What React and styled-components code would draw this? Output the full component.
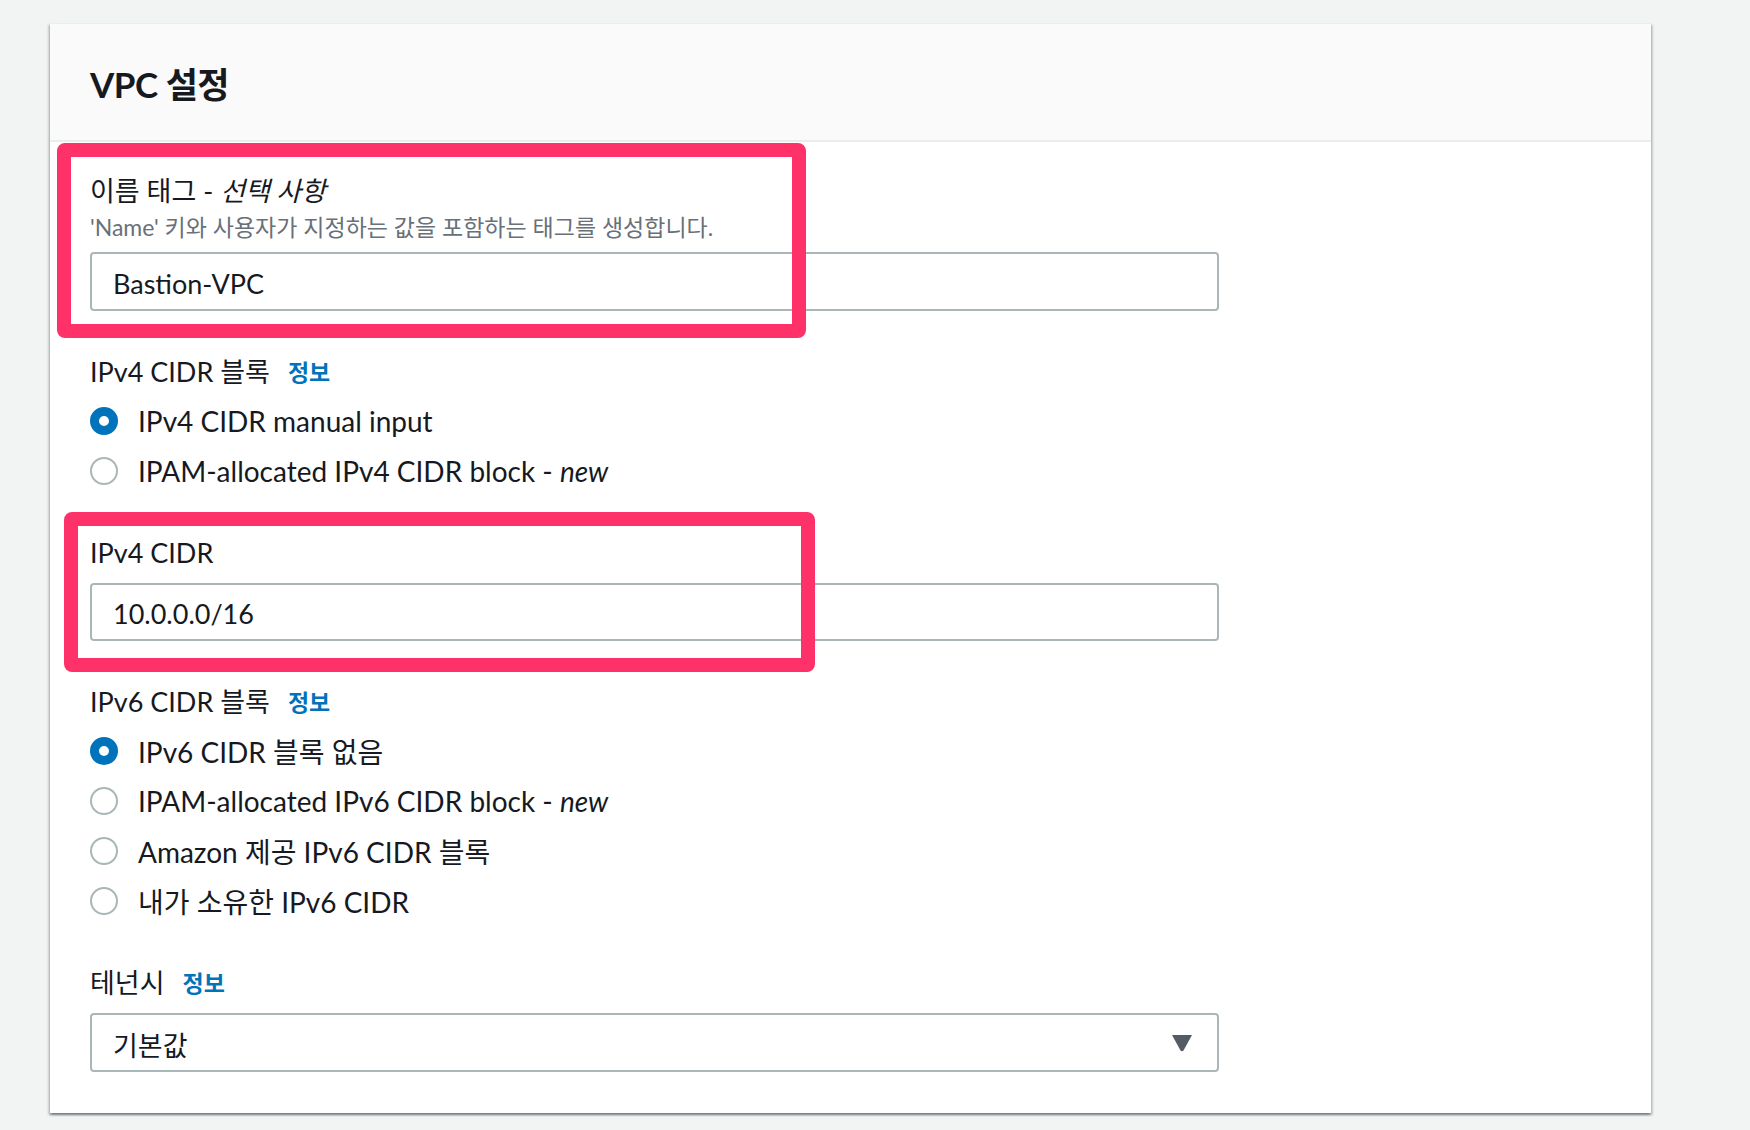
import styled, { createGlobalStyle } from "styled-components";

const GlobalStyle = createGlobalStyle`
    html, body {
        margin: 0;
        padding: 0;
        background-color: #f2f3f3;
    }
    body {
        font-family: "Lato", "Noto Sans CJK KR", sans-serif;
        color: #16191f;
    }
`

const Page = styled.div`
    width: 1750px;
    height: 1130px;
    padding: 23px 0 0 50px;
    box-sizing: border-box;
`

const Card = styled.section`
    position: relative;
    width: 1601px;
    background-color: #ffffff;
    box-shadow: 0 2px 2px rgba(0, 28, 36, 0.35), 2px 2px 2px rgba(0, 28, 36, 0.15), -2px 2px 2px rgba(0, 28, 36, 0.15);
    border-top: 1px solid #eaeded;
`

const CardHeader = styled.header`
    height: 116px;
    display: flex;
    align-items: center;
    padding: 0 40px;
    background-color: #fafafa;
    border-bottom: 2px solid #eaeded;
`

const Title = styled.h2`
    margin: 0;
    font-size: 35px;
    font-weight: 700;
    letter-spacing: -0.5px;
`

const CardBody = styled.div`
    padding: 31px 40px 41px;
    display: flex;
    flex-direction: column;
`

const Field = styled.div`
    display: flex;
    flex-direction: column;
    margin-top: ${props => props.$top || 0}px;
`

const Label = styled.div`
    font-size: 27px;
    line-height: 36px;
    display: flex;
    align-items: center;
    gap: 18px;
`

const Optional = styled.i`
    font-style: italic;
`

const InfoLink = styled.a`
    color: #0073bb;
    font-weight: 700;
    font-size: 23px;
    text-decoration: none;
`

const Description = styled.div`
    font-size: 23px;
    line-height: 32px;
    color: #687078;
    margin-top: 2px;
`

const TextInput = styled.div`
    margin-top: ${props => props.$top || 12}px;
    width: 1129px;
    height: ${props => props.$h || 59}px;
    box-sizing: border-box;
    border: 2px solid #aab7b8;
    border-radius: 4px;
    display: flex;
    align-items: center;
    justify-content: space-between;
    padding: 3px 24px 0 21px;
    font-size: 27px;
`

const Caret = styled.svg`
    width: 22px;
    height: 18px;
    margin-top: -3px;
`

const RadioList = styled.div`
    margin-top: 6px;
    display: flex;
    flex-direction: column;
`

const RadioRow = styled.label`
    height: 50px;
    display: flex;
    align-items: center;
    gap: 20px;
    font-size: 28px;
`

const RadioDot = styled.span`
    width: 28px;
    height: 28px;
    box-sizing: border-box;
    border-radius: 50%;
    border: ${props => (props.$checked ? "9.5px solid #0073bb" : "2px solid #aab7b8")};
    background-color: #ffffff;
    flex-shrink: 0;
`

const Highlight = styled.div`
    position: absolute;
    left: ${props => props.$left}px;
    top: ${props => props.$top}px;
    width: ${props => props.$width}px;
    height: ${props => props.$height}px;
    box-sizing: border-box;
    border: 14px solid #ff3169;
    border-radius: 8px;
    pointer-events: none;
`

function Radio({ checked, children }) {
    return (
        <RadioRow>
            <RadioDot $checked={checked} />
            <span>{children}</span>
        </RadioRow>
    );
}

export default function App() {
    return (
        <Page>
            <GlobalStyle />
            <Card>
                <CardHeader>
                    <Title>VPC 설정</Title>
                </CardHeader>
                <CardBody>
                    <Field>
                        <Label>
                            <span>이름 태그 - <Optional>선택 사항</Optional></span>
                        </Label>
                        <Description>'Name' 키와 사용자가 지정하는 값을 포함하는 태그를 생성합니다.</Description>
                        <TextInput $top={9}>Bastion-VPC</TextInput>
                    </Field>

                    <Field $top={43}>
                        <Label>IPv4 CIDR 블록 <InfoLink>정보</InfoLink></Label>
                        <RadioList>
                            <Radio checked>IPv4 CIDR manual input</Radio>
                            <Radio>IPAM-allocated IPv4 CIDR block - <Optional>new</Optional></Radio>
                        </RadioList>
                    </Field>

                    <Field $top={39}>
                        <Label>IPv4 CIDR</Label>
                        <TextInput $h={58}>10.0.0.0/16</TextInput>
                    </Field>

                    <Field $top={43}>
                        <Label>IPv6 CIDR 블록 <InfoLink>정보</InfoLink></Label>
                        <RadioList>
                            <Radio checked>IPv6 CIDR 블록 없음</Radio>
                            <Radio>IPAM-allocated IPv6 CIDR block - <Optional>new</Optional></Radio>
                            <Radio>Amazon 제공 IPv6 CIDR 블록</Radio>
                            <Radio>내가 소유한 IPv6 CIDR</Radio>
                        </RadioList>
                    </Field>

                    <Field $top={39}>
                        <Label>테넌시 <InfoLink>정보</InfoLink></Label>
                        <TextInput>
                            <span>기본값</span>
                            <Caret viewBox="0 0 22 18">
                                <path d="M1 1 H21 L12.5 16.5 Q11 18 9.5 16.5 Z" fill="#545b64" />
                            </Caret>
                        </TextInput>
                    </Field>
                </CardBody>
                <Highlight $left={7} $top={119} $width={749} $height={195} />
                <Highlight $left={14} $top={488} $width={751} $height={160} />
            </Card>
        </Page>
    );
}
